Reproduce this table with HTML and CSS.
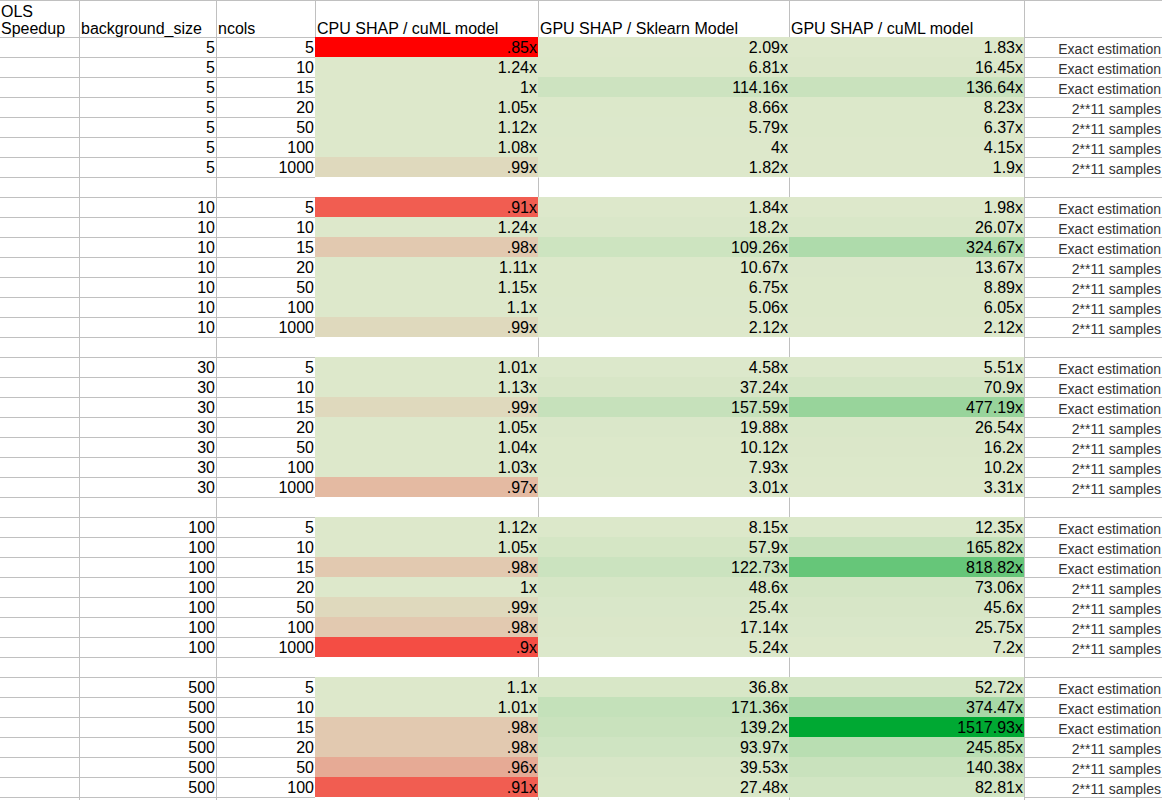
FILE: index.html
```html
<!DOCTYPE html>
<html>
<head>
<meta charset="utf-8">
<title>OLS Speedup</title>
<link rel="stylesheet" href="styles.css">
</head>
<body>
<div class="sheet">
  <div class="row head">
    <div class="c"><span>OLS<br>Speedup</span></div>
    <div class="c"><span>background_size</span></div>
    <div class="c"><span>ncols</span></div>
    <div class="c"><span>CPU SHAP / cuML model</span></div>
    <div class="c"><span>GPU SHAP / Sklearn Model</span></div>
    <div class="c"><span>GPU SHAP / cuML model</span></div>
    <div class="c"></div>
  </div>

  <div class="row"><div class="c"></div><div class="c n">5</div><div class="c n">5</div><div class="c n cs">.85x</div><div class="c n cs">2.09x</div><div class="c n cs">1.83x</div><div class="c note">Exact estimation</div></div>
  <div class="row"><div class="c"></div><div class="c n">5</div><div class="c n">10</div><div class="c n cs">1.24x</div><div class="c n cs">6.81x</div><div class="c n cs">16.45x</div><div class="c note">Exact estimation</div></div>
  <div class="row"><div class="c"></div><div class="c n">5</div><div class="c n">15</div><div class="c n cs">1x</div><div class="c n cs">114.16x</div><div class="c n cs">136.64x</div><div class="c note">Exact estimation</div></div>
  <div class="row"><div class="c"></div><div class="c n">5</div><div class="c n">20</div><div class="c n cs">1.05x</div><div class="c n cs">8.66x</div><div class="c n cs">8.23x</div><div class="c note">2**11 samples</div></div>
  <div class="row"><div class="c"></div><div class="c n">5</div><div class="c n">50</div><div class="c n cs">1.12x</div><div class="c n cs">5.79x</div><div class="c n cs">6.37x</div><div class="c note">2**11 samples</div></div>
  <div class="row"><div class="c"></div><div class="c n">5</div><div class="c n">100</div><div class="c n cs">1.08x</div><div class="c n cs">4x</div><div class="c n cs">4.15x</div><div class="c note">2**11 samples</div></div>
  <div class="row"><div class="c"></div><div class="c n">5</div><div class="c n">1000</div><div class="c n cs">.99x</div><div class="c n cs">1.82x</div><div class="c n cs">1.9x</div><div class="c note">2**11 samples</div></div>
  <div class="row"><div class="c"></div><div class="c"></div><div class="c"></div><div class="c blank first"></div><div class="c blank"></div><div class="c blank"></div><div class="c"></div></div>

  <div class="row"><div class="c"></div><div class="c n">10</div><div class="c n">5</div><div class="c n cs">.91x</div><div class="c n cs">1.84x</div><div class="c n cs">1.98x</div><div class="c note">Exact estimation</div></div>
  <div class="row"><div class="c"></div><div class="c n">10</div><div class="c n">10</div><div class="c n cs">1.24x</div><div class="c n cs">18.2x</div><div class="c n cs">26.07x</div><div class="c note">Exact estimation</div></div>
  <div class="row"><div class="c"></div><div class="c n">10</div><div class="c n">15</div><div class="c n cs">.98x</div><div class="c n cs">109.26x</div><div class="c n cs">324.67x</div><div class="c note">Exact estimation</div></div>
  <div class="row"><div class="c"></div><div class="c n">10</div><div class="c n">20</div><div class="c n cs">1.11x</div><div class="c n cs">10.67x</div><div class="c n cs">13.67x</div><div class="c note">2**11 samples</div></div>
  <div class="row"><div class="c"></div><div class="c n">10</div><div class="c n">50</div><div class="c n cs">1.15x</div><div class="c n cs">6.75x</div><div class="c n cs">8.89x</div><div class="c note">2**11 samples</div></div>
  <div class="row"><div class="c"></div><div class="c n">10</div><div class="c n">100</div><div class="c n cs">1.1x</div><div class="c n cs">5.06x</div><div class="c n cs">6.05x</div><div class="c note">2**11 samples</div></div>
  <div class="row"><div class="c"></div><div class="c n">10</div><div class="c n">1000</div><div class="c n cs">.99x</div><div class="c n cs">2.12x</div><div class="c n cs">2.12x</div><div class="c note">2**11 samples</div></div>
  <div class="row"><div class="c"></div><div class="c"></div><div class="c"></div><div class="c blank first"></div><div class="c blank"></div><div class="c blank"></div><div class="c"></div></div>

  <div class="row"><div class="c"></div><div class="c n">30</div><div class="c n">5</div><div class="c n cs">1.01x</div><div class="c n cs">4.58x</div><div class="c n cs">5.51x</div><div class="c note">Exact estimation</div></div>
  <div class="row"><div class="c"></div><div class="c n">30</div><div class="c n">10</div><div class="c n cs">1.13x</div><div class="c n cs">37.24x</div><div class="c n cs">70.9x</div><div class="c note">Exact estimation</div></div>
  <div class="row"><div class="c"></div><div class="c n">30</div><div class="c n">15</div><div class="c n cs">.99x</div><div class="c n cs">157.59x</div><div class="c n cs">477.19x</div><div class="c note">Exact estimation</div></div>
  <div class="row"><div class="c"></div><div class="c n">30</div><div class="c n">20</div><div class="c n cs">1.05x</div><div class="c n cs">19.88x</div><div class="c n cs">26.54x</div><div class="c note">2**11 samples</div></div>
  <div class="row"><div class="c"></div><div class="c n">30</div><div class="c n">50</div><div class="c n cs">1.04x</div><div class="c n cs">10.12x</div><div class="c n cs">16.2x</div><div class="c note">2**11 samples</div></div>
  <div class="row"><div class="c"></div><div class="c n">30</div><div class="c n">100</div><div class="c n cs">1.03x</div><div class="c n cs">7.93x</div><div class="c n cs">10.2x</div><div class="c note">2**11 samples</div></div>
  <div class="row"><div class="c"></div><div class="c n">30</div><div class="c n">1000</div><div class="c n cs">.97x</div><div class="c n cs">3.01x</div><div class="c n cs">3.31x</div><div class="c note">2**11 samples</div></div>
  <div class="row"><div class="c"></div><div class="c"></div><div class="c"></div><div class="c blank first"></div><div class="c blank"></div><div class="c blank"></div><div class="c"></div></div>

  <div class="row"><div class="c"></div><div class="c n">100</div><div class="c n">5</div><div class="c n cs">1.12x</div><div class="c n cs">8.15x</div><div class="c n cs">12.35x</div><div class="c note">Exact estimation</div></div>
  <div class="row"><div class="c"></div><div class="c n">100</div><div class="c n">10</div><div class="c n cs">1.05x</div><div class="c n cs">57.9x</div><div class="c n cs">165.82x</div><div class="c note">Exact estimation</div></div>
  <div class="row"><div class="c"></div><div class="c n">100</div><div class="c n">15</div><div class="c n cs">.98x</div><div class="c n cs">122.73x</div><div class="c n cs">818.82x</div><div class="c note">Exact estimation</div></div>
  <div class="row"><div class="c"></div><div class="c n">100</div><div class="c n">20</div><div class="c n cs">1x</div><div class="c n cs">48.6x</div><div class="c n cs">73.06x</div><div class="c note">2**11 samples</div></div>
  <div class="row"><div class="c"></div><div class="c n">100</div><div class="c n">50</div><div class="c n cs">.99x</div><div class="c n cs">25.4x</div><div class="c n cs">45.6x</div><div class="c note">2**11 samples</div></div>
  <div class="row"><div class="c"></div><div class="c n">100</div><div class="c n">100</div><div class="c n cs">.98x</div><div class="c n cs">17.14x</div><div class="c n cs">25.75x</div><div class="c note">2**11 samples</div></div>
  <div class="row"><div class="c"></div><div class="c n">100</div><div class="c n">1000</div><div class="c n cs">.9x</div><div class="c n cs">5.24x</div><div class="c n cs">7.2x</div><div class="c note">2**11 samples</div></div>
  <div class="row"><div class="c"></div><div class="c"></div><div class="c"></div><div class="c blank first"></div><div class="c blank"></div><div class="c blank"></div><div class="c"></div></div>

  <div class="row"><div class="c"></div><div class="c n">500</div><div class="c n">5</div><div class="c n cs">1.1x</div><div class="c n cs">36.8x</div><div class="c n cs">52.72x</div><div class="c note">Exact estimation</div></div>
  <div class="row"><div class="c"></div><div class="c n">500</div><div class="c n">10</div><div class="c n cs">1.01x</div><div class="c n cs">171.36x</div><div class="c n cs">374.47x</div><div class="c note">Exact estimation</div></div>
  <div class="row"><div class="c"></div><div class="c n">500</div><div class="c n">15</div><div class="c n cs">.98x</div><div class="c n cs">139.2x</div><div class="c n cs">1517.93x</div><div class="c note">Exact estimation</div></div>
  <div class="row"><div class="c"></div><div class="c n">500</div><div class="c n">20</div><div class="c n cs">.98x</div><div class="c n cs">93.97x</div><div class="c n cs">245.85x</div><div class="c note">2**11 samples</div></div>
  <div class="row"><div class="c"></div><div class="c n">500</div><div class="c n">50</div><div class="c n cs">.96x</div><div class="c n cs">39.53x</div><div class="c n cs">140.38x</div><div class="c note">2**11 samples</div></div>
  <div class="row"><div class="c"></div><div class="c n">500</div><div class="c n">100</div><div class="c n cs">.91x</div><div class="c n cs">27.48x</div><div class="c n cs">82.81x</div><div class="c note">2**11 samples</div></div>
  <div class="row"><div class="c"></div><div class="c"></div><div class="c"></div><div class="c blank first"></div><div class="c blank"></div><div class="c blank"></div><div class="c"></div></div>
</div>
<script src="script.js"></script>
</body>
</html>
```

FILE: styles.css
```css
html, body {
  margin: 0;
  padding: 0;
  background: #ffffff;
}

body {
  font-family: "Liberation Sans", Arial, sans-serif;
  font-size: 16px;
  color: #000000;
}

.sheet {
  width: 1162px;
  height: 800px;
  overflow: hidden;
}

.row {
  display: grid;
  grid-template-columns: 79px 137px 99px 223px 251px 235px 138px;
  height: 20px;
}

.c {
  box-sizing: border-box;
  height: 100%;
  border-top: 1px solid #c0c0c0;
  border-left: 1px solid #c0c0c0;
  padding: 0 1px;
  line-height: 19px;
  white-space: nowrap;
  overflow: hidden;
}

.c:first-child {
  border-left: none;
}

.head {
  height: 37px;
}

.head .c {
  display: flex;
  align-items: flex-end;
  line-height: 17px;
}

.n {
  text-align: right;
  padding-right: 1px;
}

.cs {
  border-color: transparent;
}

.blank {
  border-top-color: transparent;
}

.blank.first {
  border-left-color: transparent;
}

.note {
  font-size: 14px;
  color: #333333;
  text-align: right;
  line-height: 16px;
  padding-top: 3px;
  padding-right: 1px;
}
```

FILE: script.js
```js
(function () {
  var lo = [255, 0, 0];
  var mid = [221, 232, 203];
  var hi = [0, 169, 51];
  var cells = document.querySelectorAll('.cs');
  for (var k = 0; k < cells.length; k++) {
    var el = cells[k];
    var v = parseFloat(el.textContent);
    var a, b, t;
    if (v <= 1) {
      a = lo; b = mid; t = (v - 0.85) / 0.15;
    } else {
      a = mid; b = hi; t = (v - 1) / (1517.93 - 1);
    }
    t = Math.max(0, Math.min(1, t));
    var c = [];
    for (var i = 0; i < 3; i++) {
      c.push(Math.round(a[i] + (b[i] - a[i]) * t));
    }
    el.style.backgroundColor = 'rgb(' + c.join(',') + ')';
  }
})();
```
